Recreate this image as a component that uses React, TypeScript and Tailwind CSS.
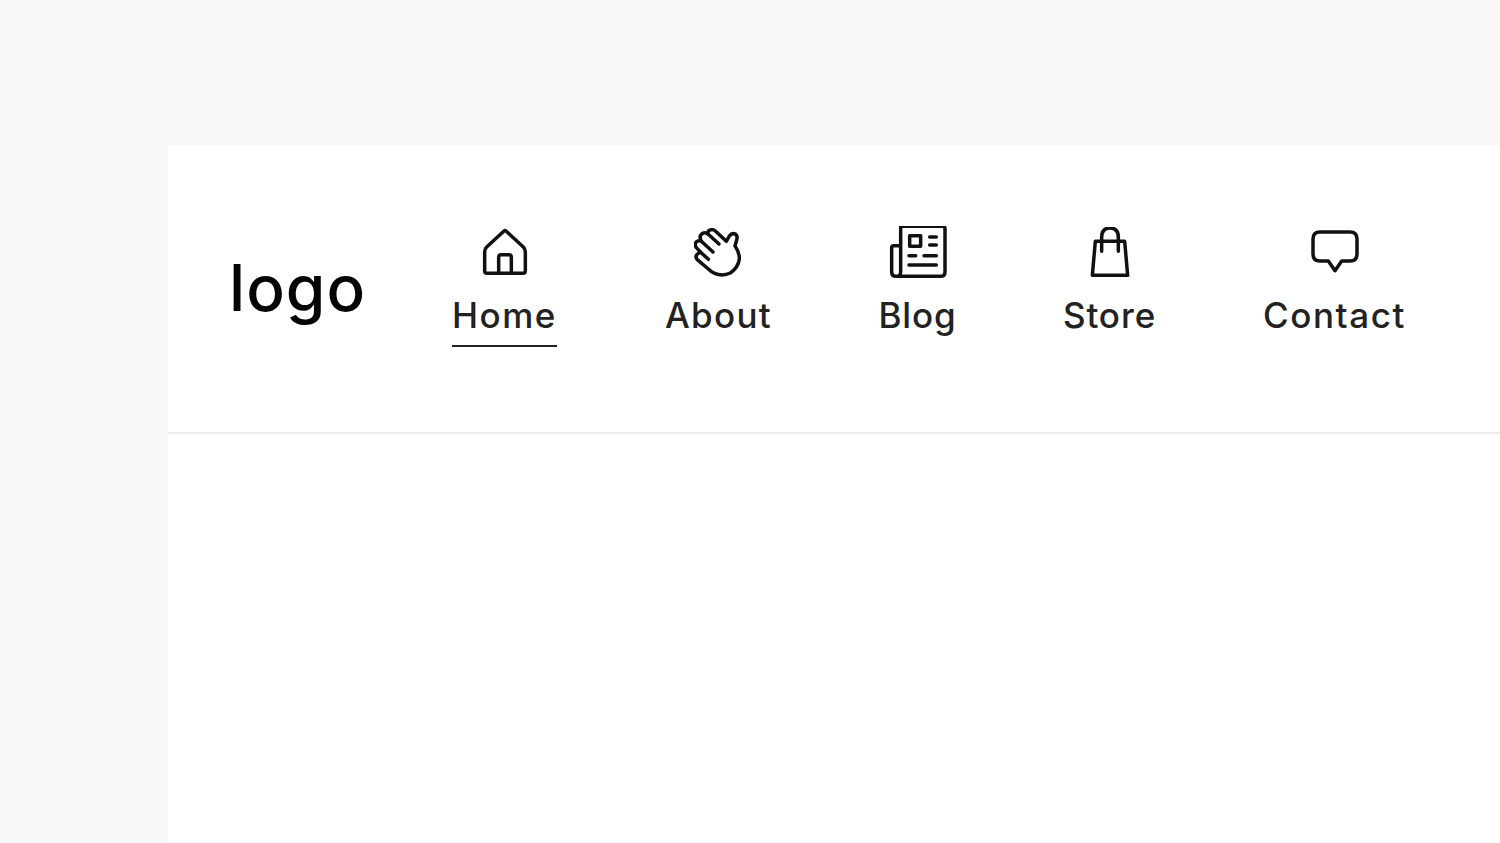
const sw = { fill: "none", stroke: "#111", strokeLinecap: "round" as const, strokeLinejoin: "round" as const };

function HomeIcon() {
  return (
    <svg width="50" height="50" viewBox="0 0 150 150" {...sw} strokeWidth="10.5">
      <path d="M72 9 Q75 6 78 9 L130 57 Q136 63 136 71 L136 129 Q136 136 129 136 L21 136 Q14 136 14 129 L14 71 Q14 63 20 57 Z" />
      <path d="M56 136 V88 Q56 80 63 80 H87 Q94 80 94 88 V136" />
    </svg>
  );
}

function HandIcon() {
  return (
    <svg width="50" height="50" viewBox="763 52 150 150" {...sw} strokeWidth="10.5">
      <path d="M772 146 Q765 136 775 129 L782 124 L770 111 Q762 100 772 92 Q778 88 785 92 Q776 76 789 68 Q797 64 805 70 Q803 58 815 57 Q822 56 828 62 L860 92 L869 76 Q876 66 887 70 Q895 76 891 88 L886 106 Q900 125 899 145 Q896 170 872 187 Q848 198 825 188 Q815 184 806 175 Z" />
      <path d="M785 92 L820 124" />
      <path d="M805 70 L838 100" />
      <path d="M782 124 L806 146" />
    </svg>
  );
}

function BlogIcon() {
  return (
    <svg width="58" height="54" viewBox="0 5 174 162" {...sw} strokeWidth="10.5">
      <path d="M35 6 H161 Q168 6 168 13 V142 Q168 156 154 156 H22 Q8 156 8 142 V70 Q8 64 14 64 H35 M35 6 V142 Q35 156 22 156" />
      <path d="M62 34 H95 V66 H62 Z" />
      <path d="M122 38 H142 M122 62 H142 M60 94 H80 M105 94 H142 M60 122 H142" />
    </svg>
  );
}

function StoreIcon() {
  return (
    <svg width="42" height="52" viewBox="0 5 126 156" {...sw} strokeWidth="10.5">
      <path d="M19 48 H107 L116 150 H10 Z" />
      <path d="M38 78 V36 Q38 8 63 8 Q88 8 88 36 V78" />
    </svg>
  );
}

function ContactIcon() {
  return (
    <svg width="50" height="46" viewBox="-3 0 150 138" {...sw} strokeWidth="10.5">
      <path d="M27 6 H117 Q138 6 138 27 V72 Q138 93 117 93 H92 L72 122 L52 93 H27 Q6 93 6 72 V27 Q6 6 27 6 Z" />
    </svg>
  );
}

const items = [
  { label: "Home", w: "w-[105px]", track: "tracking-[1.5px]", active: true, icon: <HomeIcon /> },
  { label: "About", w: "w-[105px]", track: "tracking-[1.3px]", active: false, icon: <HandIcon /> },
  { label: "Blog", w: "w-[75px]", track: "tracking-[0.9px]", active: false, icon: <BlogIcon /> },
  { label: "Store", w: "w-[91px]", track: "tracking-[0.9px]", active: false, icon: <StoreIcon /> },
  { label: "Contact", w: "w-[141px]", track: "tracking-[1.6px]", active: false, icon: <ContactIcon /> },
];

export default function App() {
  return (
    <div className="h-[843px] overflow-hidden bg-[#f7f7f7] pl-[168px] pt-[145px] font-['Inter',sans-serif]">
      <main className="h-full bg-white">
        <header className="flex h-[289px] items-start border-b-2 border-[#ececec] pl-[61px]">
          <div className="mt-[107px] w-[223px] text-[64px] leading-[72px] font-medium tracking-[1px] text-[#050505]">logo</div>
          <nav className="flex gap-[109px] pt-[80px]">
            {items.map((it) => (
              <a key={it.label} className={`flex flex-col items-center ${it.w}`}>
                <div className="flex h-[56px] items-center justify-center">{it.icon}</div>
                <span className={`mt-[13px] text-[35px] leading-[42px] font-medium whitespace-nowrap text-[#222] ${it.track}`}>{it.label}</span>
                {it.active && <span className="mt-[9px] h-[2px] w-full bg-[#222]" />}
              </a>
            ))}
          </nav>
        </header>
      </main>
    </div>
  );
}
